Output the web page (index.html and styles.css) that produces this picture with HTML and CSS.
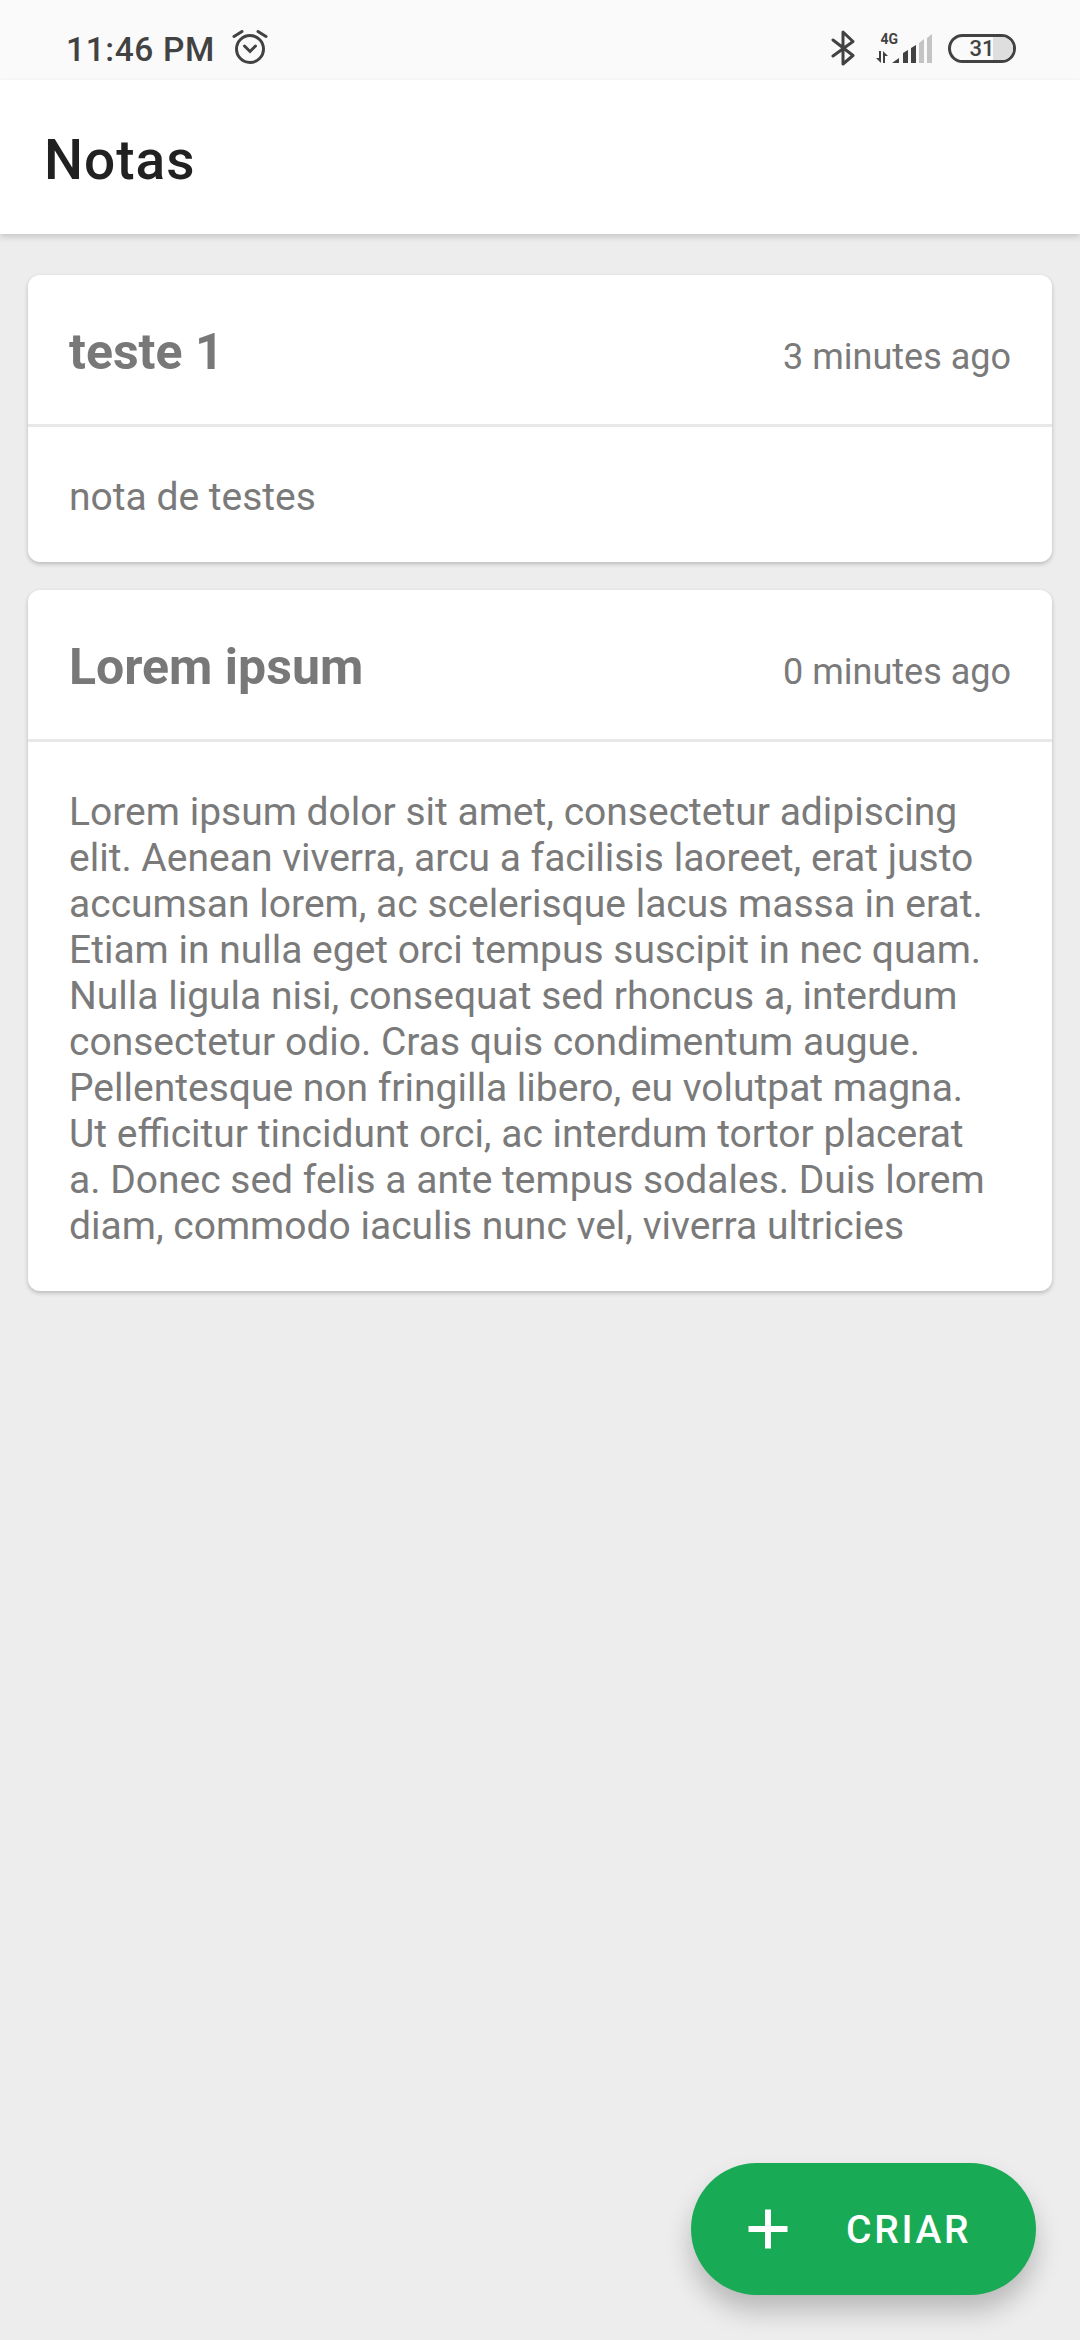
FILE: index.html
```html
<!DOCTYPE html>
<html>
<head>
    <title>Notas</title>
    <link rel="stylesheet" href="styles.css">
</head>
<body>
    <div class="app">
        <div class="status-bar">
            <div class="status-left">
                <span class="clock">11:46 PM</span>
                <svg class="alarm" width="36" height="36" viewBox="0 0 36 36" fill="none" stroke="#424242" stroke-width="3" stroke-linecap="round">
                    <circle cx="18" cy="19" r="13.500"/>
                    <path d="M12.500 16l5.500 5.500 5.500-5.500"/>
                    <path d="M2 6.500l8-5M34 6.500l-8-5"/>
                </svg>
            </div>
            <div class="status-right">
                <svg class="bluetooth" width="24" height="36" viewBox="0 0 24 36" fill="none" stroke="#424242" stroke-width="3" stroke-linejoin="round" stroke-linecap="round">
                    <path d="M2 10l20 15.500-10 8.500V2l10 9.500L2 26"/>
                </svg>
                <svg class="signal" width="57" height="34" viewBox="0 -3 57 34">
                    <text x="5.500" y="11" class="signal-text">4G</text>
                    <path d="M4 18h2v12l-5-5h3zM8 30V18l5 5h-3v7z" fill="#424242"/>
                    <path d="M17 30l7-5v5zM28 30V20l5-3v13zM36 30V15l5-3v18z" fill="#424242"/>
                    <path d="M44 30V10l5-4v24zM52 30V5l5-4v29z" fill="#c4c4c4"/>
                </svg>
                <div class="battery">
                    <div class="battery-fill"></div>
                    <span class="battery-text">31</span>
                </div>
            </div>
        </div>
        <header class="header">
            <h1>Notas</h1>
        </header>
        <main class="list">
            <section class="card">
                <div class="card-head">
                    <h2>teste 1</h2>
                    <span class="time">3 minutes ago</span>
                </div>
                <div class="card-body">nota de testes</div>
            </section>
            <section class="card">
                <div class="card-head">
                    <h2>Lorem ipsum</h2>
                    <span class="time">0 minutes ago</span>
                </div>
                <div class="card-body">Lorem ipsum dolor sit amet, consectetur adipiscing elit. Aenean viverra, arcu a facilisis laoreet, erat justo accumsan lorem, ac scelerisque lacus massa in erat. Etiam in nulla eget orci tempus suscipit in nec quam. Nulla ligula nisi, consequat sed rhoncus a, interdum consectetur odio. Cras quis condimentum augue. Pellentesque non fringilla libero, eu volutpat magna. Ut efficitur tincidunt orci, ac interdum tortor placerat a. Donec sed felis a ante tempus sodales. Duis lorem diam, commodo iaculis nunc vel, viverra ultricies</div>
            </section>
        </main>
        <button class="fab">
            <svg width="40" height="40" viewBox="0 0 40 40" fill="#fff">
                <path d="M17 .5h6V17h16.500v6H23v16.500h-6V23H.5v-6H17z"/>
            </svg>
            <span>CRIAR</span>
        </button>
    </div>
</body>
</html>
```
FILE: styles.css
```css
* {
    box-sizing: border-box;
}
html, body {
    margin: 0;
    padding: 0;
}
body {
    font-family: Roboto, sans-serif;
    background: #ededed;
}
.app {
    position: relative;
    width: 1080px;
    height: 2340px;
    overflow: hidden;
    background: #ededed;
}
.status-bar {
    height: 80px;
    background: #fafafa;
    display: flex;
    justify-content: space-between;
    align-items: center;
    padding: 16px 64px 0 66px;
    color: #424242;
}
.status-left {
    display: flex;
    align-items: center;
    gap: 17px;
}
.clock {
    font-size: 33.5px;
    font-weight: 500;
    letter-spacing: 0.6px;
    padding-top: 2px;
}
.status-right {
    display: flex;
    align-items: center;
}
.bluetooth {
    margin-right: 20px;
}
.signal {
    margin: 0 16px 2px 0;
}
.signal-text {
    font-family: Roboto, sans-serif;
    font-size: 14px;
    font-weight: 700;
    fill: #424242;
}
.battery {
    position: relative;
    width: 68px;
    height: 29px;
    border: 3px solid #424242;
    border-radius: 15px;
    text-align: center;
}
.battery-fill {
    position: absolute;
    top: 0;
    right: 0;
    bottom: 0;
    width: 20px;
    background: #dedede;
    border-radius: 0 12px 12px 0;
}
.battery-text {
    position: relative;
    display: block;
    font-size: 22px;
    font-weight: 500;
    line-height: 23px;
    color: #424242;
}
.header {
    height: 154px;
    background: #fff;
    display: flex;
    align-items: center;
    padding: 5px 0 0 44px;
    box-shadow: 0 3px 6px rgba(0,0,0,0.16);
    position: relative;
}
.header h1 {
    margin: 0;
    font-size: 55px;
    font-weight: 500;
    letter-spacing: 1px;
    color: #212121;
}
.list {
    padding: 41px 28px 0;
    display: flex;
    flex-direction: column;
    gap: 28px;
}
.card {
    background: #fff;
    border-radius: 12px;
    box-shadow: 0 2px 4px rgba(0,0,0,0.22);
}
.card-head {
    height: 152px;
    border-bottom: 3px solid #e8e8e8;
    display: flex;
    justify-content: space-between;
    align-items: center;
    padding: 5px 41px 0 41px;
}
.card-head h2 {
    margin: 0;
    font-size: 50px;
    font-weight: 700;
    color: #787878;
}
.time {
    font-size: 36px;
    color: #7a7a7a;
    margin-top: 10px;
}
.card-body {
    padding: 47px 62px 42px 41px;
    font-size: 39px;
    line-height: 46px;
    color: #7a7a7a;
}
.fab {
    position: absolute;
    left: 691px;
    top: 2163px;
    width: 345px;
    height: 132px;
    border: none;
    border-radius: 66px;
    background: #18aa54;
    color: #fff;
    display: flex;
    align-items: center;
    padding: 0 0 0 57px;
    font-family: Roboto, sans-serif;
    font-size: 39px;
    font-weight: 500;
    letter-spacing: 2.7px;
    box-shadow: 0 16px 26px rgba(0,0,0,0.22);
}
.fab span {
    margin: 2px 0 0 58px;
}
```
